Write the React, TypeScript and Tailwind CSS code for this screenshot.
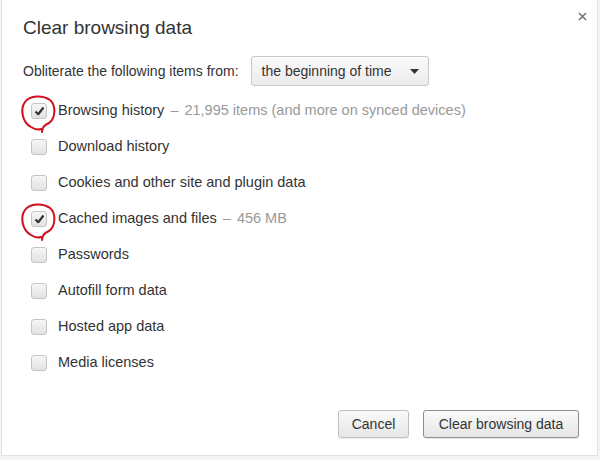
import React from "react";

const items = [
  { label: "Browsing history", note: "21,995 items (and more on synced devices)", checked: true },
  { label: "Download history" },
  { label: "Cookies and other site and plugin data" },
  { label: "Cached images and files", note: "456 MB", checked: true },
  { label: "Passwords" },
  { label: "Autofill form data" },
  { label: "Hosted app data" },
  { label: "Media licenses" },
];

function Checkbox({ checked }: { checked?: boolean }) {
  return (
    <span className="relative flex h-[16px] w-[16px] shrink-0 items-center justify-center rounded-[3px] border border-[#c4c4c4] bg-gradient-to-b from-[#f6f6f6] to-[#e2e2e2]">
      {checked && (
        <svg width="11" height="10" viewBox="0 0 11 10">
          <path d="M1.5 5.5 L4.2 8.2 L9.5 1.5" fill="none" stroke="#333" strokeWidth="2.2" strokeLinejoin="round" />
        </svg>
      )}
      {checked && (
        <svg className="absolute left-[-12px] top-[-10px]" width="44" height="42" viewBox="0 0 44 42">
          <path
            d="M22 38 C22 34 24 31 29 29 C36 24 36 11 30 6 C23 1 10 1 5 8 C0 15 2 28 11 33 C14 35 18 36 21 35"
            fill="none"
            stroke="#d0101e"
            strokeWidth="2"
            strokeLinecap="round"
          />
        </svg>
      )}
    </span>
  );
}

export default function App() {
  return (
    <div className="h-[460px] w-[600px] bg-[#f3f3f3] pl-[1px] font-['Liberation_Sans',Arial,sans-serif] text-[#333]">
      <div className="flex h-[456px] w-[597px] flex-col border-x border-b border-[#e2e2e2] bg-white pl-[21px] pr-[18px]">
        <div className="flex items-start justify-between pt-[17px]">
          <h1 className="text-[19px] leading-[22px] text-[#333]">Clear browsing data</h1>
          <button type="button" className="mr-[-8px] mt-[-5px]">
            <svg width="9" height="9" viewBox="0 0 9 9">
              <path d="M1 1 L8 8 M8 1 L1 8" stroke="#777" strokeWidth="1.6" />
            </svg>
          </button>
        </div>

        <div className="mt-[17px] flex items-center gap-[12px] text-[14px]">
          <span>Obliterate the following items from:</span>
          <div className="flex h-[30px] w-[178px] items-center justify-between rounded-[3px] border border-[#c8c8c8] bg-gradient-to-b from-[#fbfbfb] to-[#ebebeb] pl-[10px] pr-[9px]">
            <span>the beginning of time</span>
            <svg width="9" height="5" viewBox="0 0 9 5">
              <path d="M0 0 H9 L4.5 5 Z" fill="#333" />
            </svg>
          </div>
        </div>

        <div className="mt-[7px] flex flex-col">
          {items.map((item) => (
            <label key={item.label} className="flex h-[36px] items-center gap-[11px] pl-[8px] text-[14.5px]">
              <Checkbox checked={item.checked} />
              <span>
                {item.label}
                {item.note && (
                  <span className="text-[#999]">
                    <span className="px-[6px]">–</span>
                    {item.note}
                  </span>
                )}
              </span>
            </label>
          ))}
        </div>

        <div className="mt-[29px] flex justify-end gap-[14px] text-[14px]">
          <button
            type="button"
            className="h-[28px] w-[71px] rounded-[3px] border border-[#c0c0c0] bg-gradient-to-b from-[#fafafa] to-[#e6e6e6] text-[#333] shadow-[0_1px_1px_rgba(0,0,0,0.08)]"
          >
            Cancel
          </button>
          <button
            type="button"
            className="h-[28px] w-[156px] rounded-[3px] border border-[#8e8e8e] bg-gradient-to-b from-[#fafafa] to-[#e6e6e6] text-[#333] shadow-[0_1px_1px_rgba(0,0,0,0.1)]"
          >
            Clear browsing data
          </button>
        </div>
      </div>
    </div>
  );
}
